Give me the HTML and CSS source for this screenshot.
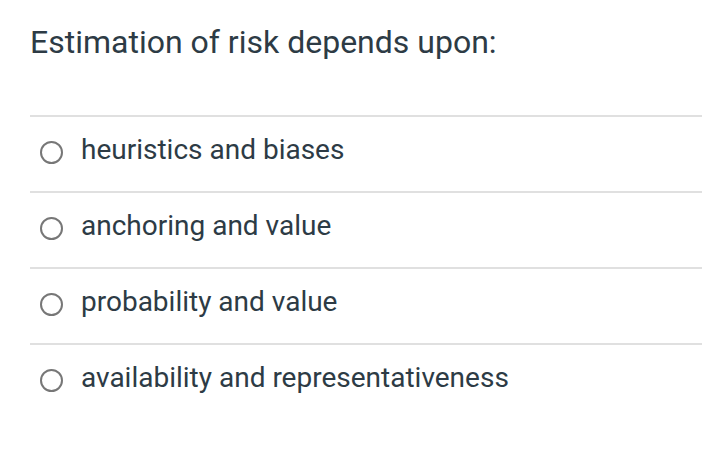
FILE: index.html
```html
<!DOCTYPE html>
<html>
<head>
<meta charset="utf-8">
<link rel="stylesheet" href="styles.css">
</head>
<body>
<div class="quiz">
  <h1 class="question">Estimation of risk depends upon:</h1>
  <ul class="answers">
    <li class="answer"><span class="radio"></span><span class="label">heuristics and biases</span></li>
    <li class="answer"><span class="radio"></span><span class="label">anchoring and value</span></li>
    <li class="answer"><span class="radio"></span><span class="label">probability and value</span></li>
    <li class="answer"><span class="radio"></span><span class="label">availability and representativeness</span></li>
  </ul>
</div>
</body>
</html>
```
FILE: styles.css
```css
html, body {
  margin: 0;
  padding: 0;
  background: #fff;
}
body {
  font-family: Roboto, "Liberation Sans", sans-serif;
  color: #2d3b45;
}
.quiz {
  padding-left: 30px;
}
.question {
  margin: 0;
  padding-top: 20px;
  font-size: 32px;
  font-weight: 400;
  line-height: 44px;
  height: 95px;
}
.answers {
  list-style: none;
  margin: 0;
  padding: 0;
}
.answer {
  display: flex;
  align-items: center;
  gap: 18px;
  height: 74px;
  border-top: 2px solid #e0e0e0;
  padding-left: 10px;
}
.radio {
  width: 19px;
  height: 19px;
  border: 2px solid #777;
  border-radius: 50%;
  flex: none;
  margin-bottom: 3px;
}
.label {
  font-size: 28px;
  line-height: 30px;
  margin-bottom: 9px;
}
```
